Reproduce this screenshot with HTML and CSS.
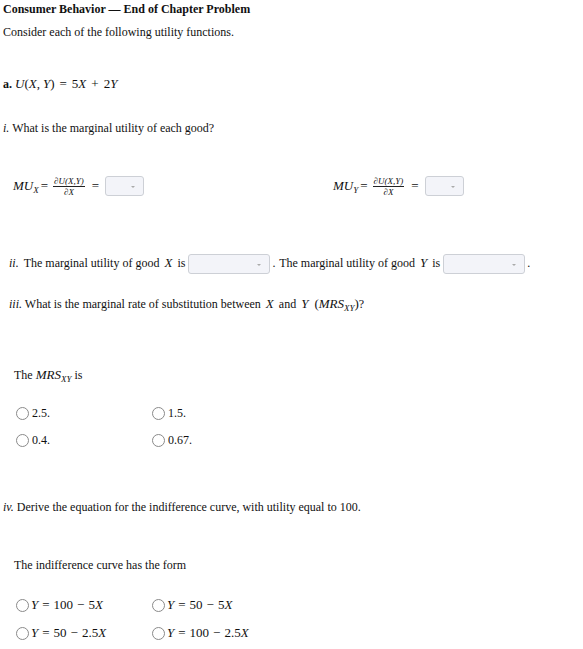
FILE: index.html
```html
<!DOCTYPE html>
<html>
<head>
<meta charset="utf-8">
<link rel="stylesheet" href="styles.css">
</head>
<body>
<div class="page">
  <div class="title">Consumer Behavior — End of Chapter Problem</div>
  <div class="line intro">Consider each of the following utility functions.</div>
  <div class="line parta"><b>a.</b> <span class="math"><span class="m">U</span>(<span class="m">X</span>,<span class="sp"></span><span class="m">Y</span>)<span class="op">=</span>5<span class="m">X</span><span class="op">+</span>2<span class="m">Y</span></span></div>
  <div class="line q1"><i>i.</i> What is the marginal utility of each good?</div>

  <div class="murow">
    <div class="mugroup first">
      <span class="mu"><span class="m">MU</span><span class="sub">X</span></span><span class="eq">=</span><span class="frac"><span class="num">∂U(X,Y)</span><span class="den">∂X</span></span><span class="eq">=</span><span class="dd small"><span class="caret"></span></span>
    </div>
    <div class="mugroup">
      <span class="mu"><span class="m">MU</span><span class="sub">Y</span></span><span class="eq">=</span><span class="frac"><span class="num">∂U(X,Y)</span><span class="den">∂X</span></span><span class="eq">=</span><span class="dd small"><span class="caret"></span></span>
    </div>
  </div>

  <div class="line q2"><i>ii.</i><span class="gap"></span>The marginal utility of good <span class="mv">X</span> is <span class="dd wide"><span class="caret"></span></span><span class="dot">.</span> The marginal utility of good <span class="mv">Y</span> is <span class="dd wide"><span class="caret"></span></span><span class="dot">.</span></div>

  <div class="line q3"><i>iii.</i> What is the marginal rate of substitution between <span class="mv">X</span> and <span class="mv">Y</span> <span class="math">(<span class="m">MRS</span><span class="sub">XY</span>)</span>?</div>

  <div class="line mrs">The <span class="math"><span class="m">MRS</span><span class="sub">XY</span></span> is</div>

  <div class="opts opts1">
    <div class="opt"><span class="radio"></span><span>2.5.</span></div>
    <div class="opt"><span class="radio"></span><span>1.5.</span></div>
    <div class="opt"><span class="radio"></span><span>0.4.</span></div>
    <div class="opt"><span class="radio"></span><span>0.67.</span></div>
  </div>

  <div class="line q4"><i>iv.</i> Derive the equation for the indifference curve, with utility equal to 100.</div>

  <div class="line form">The indifference curve has the form</div>

  <div class="opts opts2">
    <div class="opt"><span class="radio"></span><span class="math"><span class="m">Y</span><span class="op">=</span>100<span class="op">−</span>5<span class="m">X</span></span></div>
    <div class="opt"><span class="radio"></span><span class="math"><span class="m">Y</span><span class="op">=</span>50<span class="op">−</span>5<span class="m">X</span></span></div>
    <div class="opt"><span class="radio"></span><span class="math"><span class="m">Y</span><span class="op">=</span>50<span class="op">−</span>2.5<span class="m">X</span></span></div>
    <div class="opt"><span class="radio"></span><span class="math"><span class="m">Y</span><span class="op">=</span>100<span class="op">−</span>2.5<span class="m">X</span></span></div>
  </div>
</div>
</body>
</html>
```
FILE: styles.css
```css
html, body {
  margin: 0;
  padding: 0;
  background: #fff;
}
.page {
  font-family: "Liberation Serif", "Times New Roman", serif;
  font-size: 12px;
  line-height: 14px;
  color: #111;
  padding: 2px 0 0 3px;
}
.title {
  font-weight: bold;
}
.line {
  white-space: nowrap;
}
.m {
  font-style: italic;
}
.math {
  font-size: 13px;
}
.mv {
  font-style: italic;
  font-size: 13px;
  margin: 0 2px;
}
.sp {
  display: inline-block;
  width: 3px;
}
.op {
  margin: 0 4px;
}
.parta .op {
  margin: 0 5px;
}
.sub {
  font-style: italic;
  font-size: 9px;
  position: relative;
  top: 3px;
  line-height: 0;
}
.intro { margin-top: 9px; }
.parta { margin-top: 38px; }
.q1 { margin-top: 30px; }

.murow {
  margin-top: 41px;
  display: flex;
  height: 20px;
  align-items: center;
  padding-left: 10px;
}
.mugroup {
  display: flex;
  align-items: center;
  white-space: nowrap;
}
.mugroup.first {
  width: 320px;
}
.mu {
  font-size: 13px;
  margin-right: 1px;
}
.eq {
  font-size: 13px;
  margin: 0 5px 0 1px;
}
.frac {
  display: inline-flex;
  flex-direction: column;
  align-items: center;
  font-style: italic;
  font-size: 9px;
  line-height: 8px;
  margin: 0 6px 0 0;
}
.num {
  border-bottom: 1px solid #222;
  padding: 0 1px 1px;
}
.den {
  padding-top: 1px;
}
.dd {
  display: inline-block;
  position: relative;
  height: 18px;
  border: 1px solid #cdd0d6;
  border-radius: 3px;
  background: #f3f4f9;
  vertical-align: middle;
  flex: none;
}
.dd.small { width: 37px; margin-left: 1px; }
.dd.wide { width: 80px; }
.caret {
  position: absolute;
  right: 8px;
  top: 9px;
  width: 0;
  height: 0;
  border-left: 2px solid transparent;
  border-right: 2px solid transparent;
  border-top: 2px solid #aaa;
}
.dot {
  margin: 0 1px 0 2px;
}
.gap {
  display: inline-block;
  width: 5px;
}
.q2 {
  margin-top: 56px;
  height: 22px;
  line-height: 22px;
  padding-left: 6px;
}
.q3 { margin-top: 23px; padding-left: 6px; }
.q3 .math { margin-left: 1px; }
.mrs { margin-top: 57px; padding-left: 11px; }

.opts {
  display: grid;
  grid-template-columns: 136px 136px;
  row-gap: 11px;
  padding-left: 13px;
}
.opts1 { margin-top: 23px; }
.opts2 { margin-top: 25px; row-gap: 12px; }
.opt {
  display: flex;
  align-items: center;
  height: 16px;
  white-space: nowrap;
}
.radio {
  width: 11px;
  height: 11px;
  border: 1px solid #8a8a8a;
  border-radius: 50%;
  background: #fff;
  margin-right: 3px;
  flex: none;
}
.opts2 .radio {
  margin-right: 2px;
}
.q4 { margin-top: 52px; }
.form { margin-top: 44px; padding-left: 11px; }
```
